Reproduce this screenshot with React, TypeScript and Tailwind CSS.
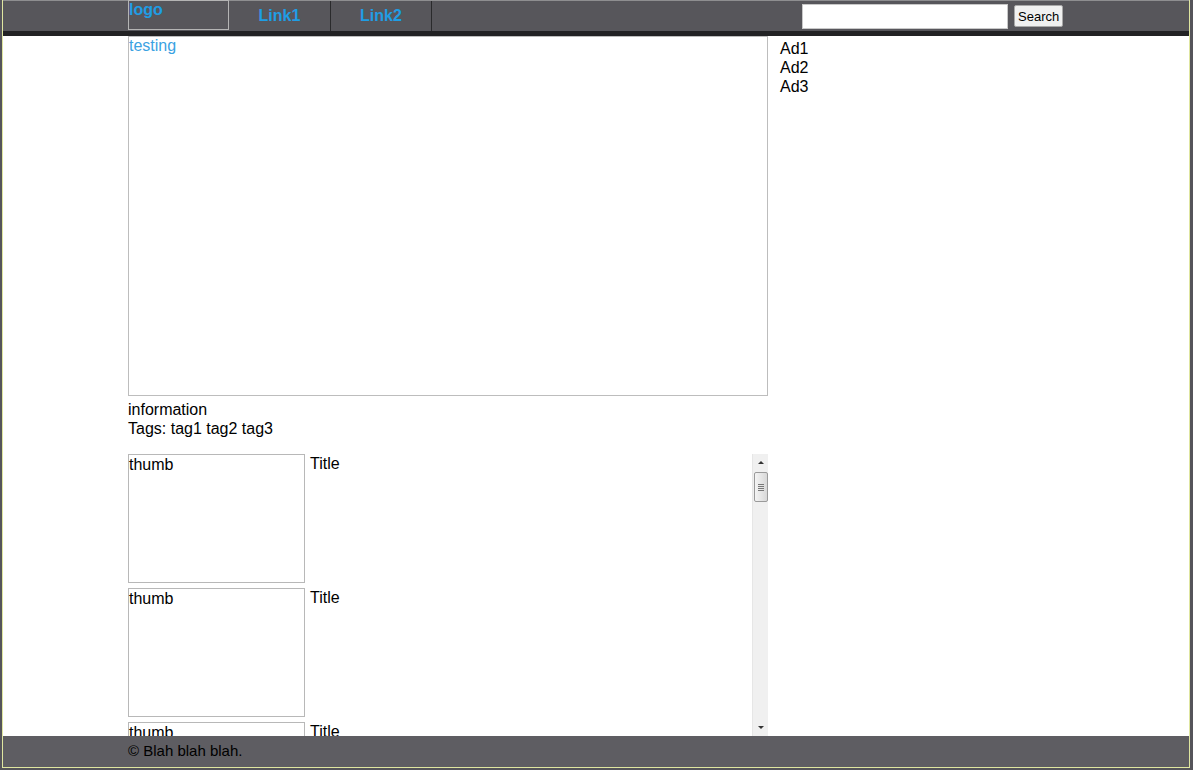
import React from "react";

const items = ["Title", "Title", "Title"];

function ScrollBar() {
  return (
    <div className="absolute right-0 top-0 bottom-0 w-[16px] bg-[#f0f0f0] border-l border-[#e6e6e6] flex flex-col items-center">
      <div className="h-[17px] w-full flex items-center justify-center">
        <div className="w-0 h-0 border-l-[3px] border-r-[3px] border-b-[3px] border-l-transparent border-r-transparent border-b-[#333]" />
      </div>
      <div className="mt-[1px] w-[14px] h-[30px] rounded-[2px] border border-[#9a9a9a] bg-gradient-to-r from-[#f4f4f4] to-[#d8d8d8] flex flex-col items-center justify-center gap-[1px]">
        <div className="w-[6px] h-[1px] bg-[#777]" />
        <div className="w-[6px] h-[1px] bg-[#777]" />
        <div className="w-[6px] h-[1px] bg-[#777]" />
        <div className="w-[6px] h-[1px] bg-[#777]" />
      </div>
      <div className="mt-auto h-[17px] w-full flex items-center justify-center">
        <div className="w-0 h-0 border-l-[3px] border-r-[3px] border-t-[3px] border-l-transparent border-r-transparent border-t-[#333]" />
      </div>
    </div>
  );
}

export default function App() {
  return (
    <div
      className="w-[1193px] h-[770px] bg-[#55545a] pl-[2px] pr-[3px] pb-[2px] overflow-hidden text-black"
      style={{ fontFamily: "'Liberation Sans', Arial, sans-serif" }}
    >
      <div className="h-full flex flex-col bg-white border-l border-r border-b border-[#dfe6a0]">
        {/* header */}
        <div className="h-[31px] bg-[#57565b] border-t border-[#8e8e90] flex items-stretch pl-[125px]">
          <div className="w-[101px] h-[30px] border border-[#b4b4b4] text-[#1f9de4] font-bold text-[16px] leading-[18px] -mt-[1px]">
            logo
          </div>
          <div className="w-[102px] border-r border-[#2a2a2c] flex items-center justify-center text-[#1f9de4] font-bold text-[16px]">
            Link1
          </div>
          <div className="w-[101px] border-r border-[#2a2a2c] flex items-center justify-center text-[#1f9de4] font-bold text-[16px]">
            Link2
          </div>
          <div className="ml-[370px] flex items-center gap-[6px]">
            <input className="w-[206px] h-[25px] bg-white border border-[#c8c8c8] outline-none" />
            <button className="h-[22px] px-[3px] bg-[#f0f0f0] border border-[#a8a8a8] rounded-[2px] text-[13px] text-black leading-none">
              Search
            </button>
          </div>
        </div>
        <div className="h-[5px] bg-[#222224]" />

        {/* content */}
        <div className="h-[700px] flex pl-[125px] gap-[12px] text-[16px] leading-[19px]">
          <div className="w-[640px] flex flex-col">
            <div className="h-[360px] border border-[#bdbdbd] text-[#3aa2e2] leading-[18px]">testing</div>
            <div className="mt-[4px]">information</div>
            <div>Tags: tag1 tag2 tag3</div>
            <div className="mt-[16px] h-[282px] relative overflow-hidden">
              {items.map((t, i) => (
                <div key={i} className="flex mb-[5px]">
                  <div className="w-[177px] h-[129px] border border-[#b8b8b8] shrink-0">thumb</div>
                  <div className="ml-[5px]">{t}</div>
                </div>
              ))}
              <ScrollBar />
            </div>
          </div>
          <div className="pt-[3px]">
            <div>Ad1</div>
            <div>Ad2</div>
            <div>Ad3</div>
          </div>
        </div>

        {/* footer */}
        <div className="flex-1 bg-[#5e5d62] pl-[125px] flex items-center text-[15px]">
          © Blah blah blah.
        </div>
      </div>
    </div>
  );
}
